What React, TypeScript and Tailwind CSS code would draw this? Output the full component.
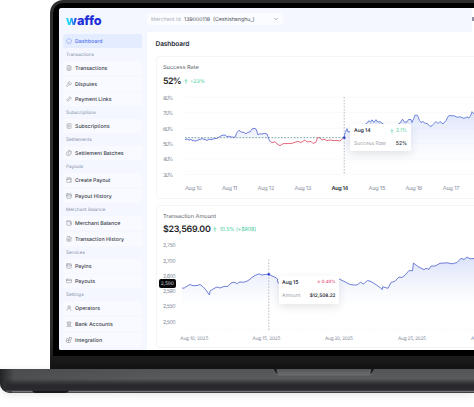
import React from "react";
import {
  Pentagon, FileText, Gavel, Link2, ReceiptText, Files, CalendarPlus, WalletCards, Wallet,
  FileClock, CreditCard, UserRound, Landmark, Blocks, ChevronDown,
} from "lucide-react";

type Item = { label: string; icon: React.ElementType };
type Group = { title: string; items: Item[] };

const groups: Group[] = [
  { title: "Transactions", items: [
    { label: "Transactions", icon: FileText },
    { label: "Disputes", icon: Gavel },
    { label: "Payment Links", icon: Link2 },
  ] },
  { title: "Subscriptions", items: [{ label: "Subscriptions", icon: ReceiptText }] },
  { title: "Settlements", items: [{ label: "Settlement Batches", icon: Files }] },
  { title: "Payouts", items: [
    { label: "Create Payout", icon: CalendarPlus },
    { label: "Payout History", icon: WalletCards },
  ] },
  { title: "Merchant Balance", items: [
    { label: "Merchant Balance", icon: Wallet },
    { label: "Transaction History", icon: FileClock },
  ] },
  { title: "Services", items: [
    { label: "Payins", icon: WalletCards },
    { label: "Payouts", icon: CreditCard },
  ] },
  { title: "Settings", items: [
    { label: "Operators", icon: UserRound },
    { label: "Bank Accounts", icon: Landmark },
    { label: "Integration", icon: Blocks },
  ] },
];

function NavItem({ item, active }: { item: Item; active?: boolean }) {
  const Icon = item.icon;
  return (
    <div className="flex h-[15.8px] items-center">
      <div className={`flex h-[14px] w-[79px] items-center gap-[3px] rounded-[2px] pl-[3px] text-[5.25px] font-medium ${active ? "bg-[#e4ecff] text-[#5272ee]" : "bg-[#f8faff] text-[#3a3d48]"}`}>
        {Icon === Link2
          ? <Icon size={6} strokeWidth={1.8} className="-rotate-45 text-[#80838f]" />
          : <Icon size={6} strokeWidth={1.8} className={active ? "text-[#6684f2]" : "text-[#80838f]"} />}
        <span className="whitespace-nowrap pt-[2px] leading-[8px]">{item.label}</span>
      </div>
    </div>
  );
}

function Sidebar() {
  return (
    <aside className="w-[88.5px] shrink-0 bg-[#f4f7ff] pl-[4.5px]">
      <div className="flex h-[25.1px] items-center pl-[3px] pt-[3px] text-[12.7px] font-extrabold leading-none tracking-[-0.05px] text-[#1f2fd8]">
        <span className="bg-linear-to-r from-[#25d5f5] from-30% via-[#2b8af5] via-60% to-[#1f2fd8] bg-clip-text text-transparent">w</span>
        <span>affo</span>
      </div>
      <NavItem item={{ label: "Dashboard", icon: Pentagon }} active />
      {groups.map((g) => (
        <div key={g.title}>
          <div className="flex h-[11.1px] items-center pl-[3px] pt-[3px] text-[4.6px] leading-[6px] text-[#8791ab]">{g.title}</div>
          {g.items.map((i) => <NavItem key={i.label} item={i} />)}
        </div>
      ))}
    </aside>
  );
}

const rateUp1 = "185,139.7 187,139 189,140 191,139.6 193,140.7 196,141 199,139.7 202,138.7 205,139.5 207,140.5 209,139 211,139.8 214,138.7 217,138.3 220,136.5 222,135.3 225,135 227,136.7 229,136.2 231,137 235,137.3 237,132.5 239,130.2 241,132 244,132.5 246,133.7 248,132.3 250,132 252,129 254,128.3 256,129 258,134.8 260,133.8 262,134 265,133.3 267,134 269,139.5 270.5,142";
const rateDown = "270.5,142 273,142.7 275,141.5 277,144 280,145.7 283,143.7 287,143.5 291,143.6 294,142.6 298,141.4 301,142.6 305,139.9 307,142 311,141.4 313,143.5 316,142 317.5,137.8 320,137.7 322,140.2 324,139.2 327,140.6 330,140 334,140.6 337,140.4 340,141 343.5,137.7";
const rateUp2 = "344,137.7 345,133 347,128.7 348,132 351,131.5 354,130 358,128 362,126 366,124 369,120.7 370.5,122.3 372,119.8 374,122.3 376,119.7 377.5,122 380,121.7 386,126 393,128 400,123 402.5,119.2 404.5,122.2 407,122 408.5,119.5 411,119.5 412,122.5 414,118 415,115 417.5,115.3 419.5,120.5 421,122.5 423,121.5 425,123.2 427.5,123.7 430,126.5 432,125.8 434,123.5 436,121.5 438,123.5 440,121.5 443,124 446,120.5 448,116.5 450,115.3 452,116 454,115.6 457,117.3 460,116.8 464,118.4 467,117 469,118 471,115 472,111.7 474,114";
const rateMonths = [["Aug 10", 185], ["Aug 11", 222], ["Aug 12", 257.5], ["Aug 13", 294.5], ["Aug 14", 331.5], ["Aug 15", 368.5], ["Aug 16", 405.5], ["Aug 17", 442.7]] as const;

function RateChart() {
  return (
    <svg viewBox="155 88 319 110" className="block h-[110px] w-[319px]" fontSize="5.6" fill="#878d9b">
      <defs>
        <linearGradient id="rate" x1="0" y1="105" x2="0" y2="165" gradientUnits="userSpaceOnUse">
          <stop offset="0" stopColor="#c4d0f8" stopOpacity="0.7" />
          <stop offset="1" stopColor="#e8edfc" stopOpacity="0" />
        </linearGradient>
      </defs>
      {[80, 70, 60, 50, 40, 30].map((v, i) => (
        <g key={v}>
          <text x="163" y={99.6 + i * 15.45} textLength="10.3">{v}%</text>
          <path d={`M185 ${97.3 + i * 15.45}H474`} stroke="#f5f5f8" strokeWidth="0.6" />
        </g>
      ))}
      <path d={`M185,137.7L${rateUp1}L265,137.7Z`} fill="url(#rate)" />
      <path d={`M344,165L${rateUp2}L474,165Z`} fill="url(#rate)" />
      <path d="M185 137.7H344" stroke="#6d9a9c" strokeWidth="0.9" strokeDasharray="1.7 1.5" />
      <path d="M344.2 97V175" stroke="#a9aab1" strokeWidth="0.8" strokeDasharray="1.5 1.5" />
      <polyline points={rateUp1} fill="none" stroke="#6370d8" strokeWidth="0.9" />
      <polyline points={rateDown} fill="none" stroke="#e25c74" strokeWidth="0.9" />
      <polyline points={rateUp2} fill="none" stroke="#5f7adb" strokeWidth="0.9" />
      <circle cx="344.3" cy="137.7" r="1.3" fill="#263ed7" />
      {rateMonths.map(([t, x]) => (
        <text key={t} x={x} y="189.9" textLength={t === "Aug 11" ? 15.3 : 16.8} fontWeight={t === "Aug 14" ? 600 : 400} fill={t === "Aug 14" ? "#30323a" : "#878d9b"}>{t}</text>
      ))}
    </svg>
  );
}

const amt1 = "182,287 184,287.2 187,285.2 190,283.5 193,284.7 197,284.5 200,283.5 203,285.7 206,289 209,293.5 209.5,294 210,290 213,288 217,286 220,287 224,285.5 228,285.3 231,282 234,281.2 236,282 237.5,282.8 239,281 244,281.2 248,279.7 252,276.5 255,274.5 259,272.8 262,274 265,273.5 268.5,273.2 272,275 275,276.2 277.5,278 277.7,281.5 281,283 290,283 300,281 320,278 330,279 339,278";
const amt2 = "339,278 344,280.3 349,283 352,283.9 357,284 360.5,281.3 363.5,283 367.5,279.5 371,280.5 376,283.7 380,286.5 382.3,288.5 382.7,285.8 388,287.3 391,281.5 395,280.2 399,276 402,276.5 405,274.2 409,269.5 412.5,269.8 413.5,262 418,265.5 424,268.7 426,267.3 429,268.3 431,265 435,265 440,262.3 447,261.8 452,262.8 457,261.5 461,257.3 464,258.5 467,256 470,257.8 474,257.5";
const amounts = ["2,750", "2,700", "2,600", "2,590", "2,550", "2,500"];
const dates = [["Aug 10, 2025", 180.3], ["Aug 15, 2025", 252.5], ["Aug 20, 2025", 325], ["Aug 25, 2025", 398], ["Aug 30, 2025", 471]] as const;

function AmountChart() {
  return (
    <svg viewBox="155 236 319 110" className="block h-[110px] w-[319px]" fontSize="5.3" fill="#848a99">
      <defs>
        <linearGradient id="amount" x1="0" y1="255" x2="0" y2="306" gradientUnits="userSpaceOnUse">
          <stop offset="0" stopColor="#cbd5f8" stopOpacity="0.75" />
          <stop offset="1" stopColor="#e8edfc" stopOpacity="0" />
        </linearGradient>
      </defs>
      {amounts.map((v, i) => <text key={v} x="163" y={246.4 + i * 15.25} textLength="12.6">{v}</text>)}
      <path d={`M182,306L${amt1}L${amt2}L474,306Z`} fill="url(#amount)" />
      <path d="M182 328.7H474" stroke="#f1f2f5" strokeWidth="0.6" strokeDasharray="1.5 1.5" />
      <path d="M268.8 258.5V329" stroke="#a9aab1" strokeWidth="0.8" strokeDasharray="1.5 1.5" />
      <polyline points={amt1} fill="none" stroke="#6172d2" strokeWidth="0.9" />
      <polyline points={amt2} fill="none" stroke="#6172d2" strokeWidth="0.9" />
      <circle cx="268.8" cy="273.3" r="1.2" fill="#263ed7" />
      {dates.map(([t, x]) => <text key={t} x={x} y="338.5" fontSize="4.8" textLength="28">{t}</text>)}
    </svg>
  );
}

function Screen() {
  return (
    <div className="flex h-[342px] w-[415.5px] overflow-hidden rounded-bl-[2px] rounded-tl-[3px] bg-[#f4f7ff]">
      <Sidebar />
      <main className="flex min-w-0 flex-1 flex-col">
        <header className="flex h-[24px] shrink-0 items-center justify-between">
          <div className="mt-[-2px] flex h-[12px] w-[136px] items-center rounded-[2px] bg-[#fbfcff] pl-[4px] pt-[1px] text-[5.25px] leading-[8px]">
            <span className="w-[33px] text-[#a8adba]">Merchant Id</span>
            <span className="flex-1 whitespace-pre text-[#4a4d58]">139000118&nbsp; (Ceshishanghu_)</span>
            <ChevronDown size={6} strokeWidth={2.4} className="mr-[4px] mt-[-1px] text-[#777b87]" />
          </div>
          <div className="flex h-full w-[2px] items-center bg-white">
            <div className="mt-[-3px] h-[4px] w-[2px] bg-[#8e8da2]" />
          </div>
        </header>
        <div className="flex-1 rounded-tl-[3px] bg-white pl-[8.5px]">
          <h1 className="h-[24px] pt-[8px] text-[6.6px] font-semibold leading-[9px] tracking-[-0.1px] text-[#252936]"><span>Dashboard</span></h1>
          <section className="relative h-[142.5px] rounded-l-[4px] border-y border-l border-[#f5f5f9]">
            <div className="h-[31px] pl-[6.5px] pt-[8px]">
              <p className="text-[5.6px] leading-[7px] text-[#5b5f6a]">Success Rate</p>
              <p className="mt-[4.5px] flex items-center gap-[3px] text-[8.8px] font-semibold leading-[10px] tracking-[-0.6px] text-[#1b1d26]">52%
                <span className="flex items-center gap-[2px] text-[5.2px] font-normal tracking-normal text-[#45cc9d]"><UpArrow />+23%</span>
              </p>
            </div>
            <div className="-ml-[2px]"><RateChart /></div>
            <div className="absolute left-[193.5px] top-[67px] flex h-[27px] w-[61px] flex-col justify-between rounded-[2px] bg-white px-[4px] py-[4px] text-[5px] leading-[6px] shadow-[0_3px_8px_rgba(30,40,60,0.12)]">
              <div className="flex justify-between"><b className="font-semibold text-[#292c35]">Aug 14</b><span className="flex items-center gap-[1.5px] text-[#60d0aa]"><UpArrow />2.1%</span></div>
              <div className="flex justify-between"><span className="text-[#9c9faa]">Success Rate</span><span className="font-medium text-[#292c35]">52%</span></div>
            </div>
          </section>
          <section className="relative mt-[6px] h-[143px] rounded-l-[4px] border-y border-l border-[#f5f5f9]">
            <div className="h-[31px] pl-[6.5px] pt-[8px]">
              <p className="text-[5.6px] leading-[7px] text-[#5b5f6a]">Transaction Amount</p>
              <p className="mt-[4px] flex items-center gap-[3px] whitespace-nowrap text-[8.9px] font-semibold leading-[10px] tracking-[-0.3px] text-[#1b1d26]">$23,569.00
                <span className="flex items-center gap-[2px] text-[5.3px] font-normal tracking-[-0.05px] text-[#45cc9d]"><UpArrow />10.5% (+$908)</span>
              </p>
            </div>
            <div className="-ml-[2px]"><AmountChart /></div>
            <div className="absolute left-[2px] top-[73.5px] flex h-[9px] w-[17.5px] items-center justify-center rounded-[2px] bg-[#08080c] pt-[0.5px] text-[4.8px] leading-[6px] text-[#d7d7dd]">2,590</div>
            <div className="absolute left-[122px] top-[70px] flex h-[28px] w-[60.5px] flex-col justify-between rounded-[2px] bg-white px-[3.5px] py-[4.5px] text-[5px] leading-[6px] shadow-[0_3px_8px_rgba(30,40,60,0.12)]">
              <div className="flex justify-between"><b className="font-semibold text-[#292c35]">Aug 15</b><span className="text-[4.3px] font-medium text-[#e55072]">↓ 0.48%</span></div>
              <div className="flex justify-between"><span className="text-[#9c9faa]">Amount</span><span className="text-[4.7px] font-semibold text-[#292c35]">$12,508.22</span></div>
            </div>
          </section>
        </div>
      </main>
    </div>
  );
}

function UpArrow() {
  return <svg viewBox="0 0 5 6" className="h-[5px] w-[4px]" fill="none" stroke="currentColor" strokeWidth="0.8"><path d="M2.5 5.7V.7M.6 2.5 2.5.6 4.4 2.5" /></svg>;
}

export default function App() {
  return (
    <div className="h-[407px] w-[474px] overflow-hidden bg-white font-['Inter','Liberation_Sans',sans-serif] [text-rendering:geometricPrecision]">
      <div className="ml-[50px] h-[369px] rounded-tl-[13px] bg-linear-to-b from-[#2d2d2d] from-90% to-[#171717] pl-[3px] pt-[3px]">
        <div className="h-[353px] rounded-tl-[10px] bg-black pl-[5.5px] pt-[5px]">
          <Screen />
        </div>
        <div className="-ml-[2px] h-[13px] bg-linear-to-b from-[#1c1c1c] to-[#131313]" />
      </div>
      <div className="h-[24px] rounded-bl-[10px] bg-linear-to-b from-[#535456] from-0% via-[#5a5b5d] via-40% to-[#303134] to-85% shadow-[0_2px_8px_rgba(0,0,0,0.1)]">
        <div className="flex h-full rounded-bl-[10px] bg-linear-to-r from-[#222325] from-0% via-[#48494b]/70 via-3% to-transparent to-35%">
          <svg viewBox="0 369 474 24" className="h-[24px] w-[474px]">
            <defs>
              <linearGradient id="lip" x1="0" y1="0" x2="0" y2="1">
                <stop offset="0" stopColor="#29292d" stopOpacity="0" />
                <stop offset="0.5" stopColor="#29292d" />
                <stop offset="0.8" stopColor="#29292d" />
                <stop offset="1" stopColor="#55565a" />
              </linearGradient>
              <linearGradient id="notch" x1="0" y1="0" x2="0" y2="1">
                <stop offset="0" stopColor="#555658" />
                <stop offset="1" stopColor="#6c6d6f" />
              </linearGradient>
            </defs>
            <rect x="6" y="379" width="468" height="13" fill="url(#lip)" />
            <path d="M12 391.7H474" stroke="#747577" strokeWidth="1.2" />
            <path d="M274 369H374C373 374 371 375.5 367 375.5H281C277 375.5 275 374 274 369Z" fill="url(#notch)" />
            <path d="M274 369H276.5Q276.5 372 278 374Q275 373 274 369ZM373.8 369H371.3Q371.3 372 369.8 374Q372.8 373 373.8 369Z" fill="#17181a" />
            <path d="M32 390.5H69Q68 393 64 393H36Q33 393 32 390.5Z" fill="#161719" />
          </svg>
        </div>
      </div>
    </div>
  );
}
